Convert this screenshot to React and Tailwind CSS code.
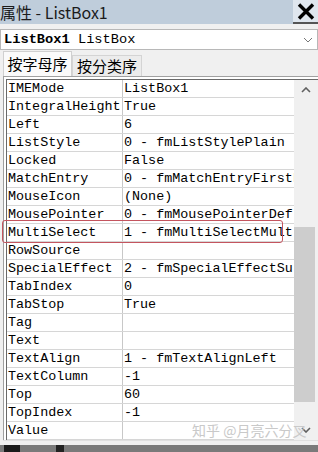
import React from 'react';

const rows = [
  ['IMEMode', 'ListBox1'],
  ['IntegralHeight', 'True'],
  ['Left', '6'],
  ['ListStyle', '0 - fmListStylePlain'],
  ['Locked', 'False'],
  ['MatchEntry', '0 - fmMatchEntryFirstL'],
  ['MouseIcon', '(None)'],
  ['MousePointer', '0 - fmMousePointerDef'],
  ['MultiSelect', '1 - fmMultiSelectMult'],
  ['RowSource', ''],
  ['SpecialEffect', '2 - fmSpecialEffectSu'],
  ['TabIndex', '0'],
  ['TabStop', 'True'],
  ['Tag', ''],
  ['Text', ''],
  ['TextAlign', '1 - fmTextAlignLeft'],
  ['TextColumn', '-1'],
  ['Top', '60'],
  ['TopIndex', '-1'],
  ['Value', ''],
];

const mono = { fontFamily: '"Liberation Mono", "Noto Sans CJK SC", monospace' };
const cjk = { fontFamily: '"Noto Sans CJK SC", "Noto Sans", sans-serif' };

export default function App() {
  return (
    <div className="relative w-[318px] h-[452px] overflow-hidden bg-[#f0f0f0] text-black">
      {/* title bar */}
      <div className="flex h-[24px] items-center justify-between bg-[#bfcddb]">
        <span className="text-[16px] leading-none text-[#1b1b1b]" style={cjk}>
          属性 - ListBox1
        </span>
        <div className="flex h-[24px] w-[25px] items-center justify-center border-b-2 border-[#555] bg-[#dfe6ee]">
          <svg width="18" height="17" viewBox="0 0 18 17">
            <path d="M2 1.5 L16 15.5 M16 1.5 L2 15.5" stroke="#000" strokeWidth="3.4" />
          </svg>
        </div>
      </div>

      {/* object dropdown */}
      <div className="mt-[5px] flex h-[21px] items-center justify-between border border-[#b8b8b8] bg-white pl-[3px] pr-[4px]">
        <span className="text-[13.7px] leading-none whitespace-pre" style={mono}>
          <b>ListBox1</b> ListBox
        </span>
        <svg width="10" height="6" viewBox="0 0 10 6">
          <path d="M1 1 L5 5 L9 1" fill="none" stroke="#777" strokeWidth="1" />
        </svg>
      </div>

      {/* tabs */}
      <div className="flex h-[26px] items-end pl-[3px] pt-[1px]">
        <div className="flex h-[25px] w-[69px] items-center justify-center border border-b-0 border-[#d0d0d0] bg-[#fafafa] text-[15px]" style={cjk}>
          按字母序
        </div>
        <div className="flex h-[21px] w-[70px] items-center justify-center border border-b-0 border-[#d4d4d4] bg-[#ececec] text-[15px]" style={cjk}>
          按分类序
        </div>
      </div>

      {/* grid frame */}
      <div className="ml-[3px] flex border-t border-l border-[#a0a0a0] bg-white">
        <div className="ml-[2px] mt-[2px] flex flex-1 border-t border-l border-[#696969]">
          <div className="w-[287px]">
            {rows.map(([k, v]) => (
              <div key={k} className="flex h-[18px] border-b border-[#d6d6d6] text-[13.4px] leading-none" style={mono}>
                <div className="flex w-[116px] shrink-0 items-center overflow-hidden whitespace-pre border-r border-[#c8c8c8] pl-[1px]">
                  {k}
                </div>
                <div className="flex min-w-0 flex-1 items-center overflow-hidden whitespace-pre pl-[1px]">
                  {v}
                </div>
              </div>
            ))}
          </div>
          {/* scrollbar */}
          <div className="flex w-[25px] flex-col bg-[#f0f0f0]">
            <div className="flex h-[20px] items-center justify-center pr-[2px]">
              <svg width="10" height="6" viewBox="0 0 10 6">
                <path d="M1 5 L5 1 L9 5" fill="none" stroke="#606060" strokeWidth="1.6" />
              </svg>
            </div>
            <div className="h-[127px]" />
            <div className="h-[175px] w-[21px] bg-[#cdcdcd]" />
            <div className="flex-1" />
            <div className="flex h-[20px] items-center justify-center pr-[2px]">
              <svg width="10" height="6" viewBox="0 0 10 6">
                <path d="M1 1 L5 5 L9 1" fill="none" stroke="#606060" strokeWidth="1.6" />
              </svg>
            </div>
          </div>
        </div>
      </div>
      <div className="ml-[3px] h-[5px] border-t border-[#e0e0e0] bg-[#f0f0f0]" />

      {/* window bottom edge */}
      <div className="flex h-[8px] items-stretch bg-[#7a7a7a]">
        <span className="ml-[4px] w-[16px] bg-[#1a1a1a]" />
        <span className="ml-[36px] w-[8px] bg-[#222]" />
      </div>

      {/* annotation box */}
      <div className="absolute left-[2px] top-[220px] h-[23px] w-[281px] rounded-[3px] border border-[#c4555f]" />

      {/* watermark */}
      <div className="absolute left-[192px] top-[423px] text-[14px] leading-none text-[#c9c9c9]" style={cjk}>
        知乎 @月亮六分叉
      </div>
    </div>
  );
}
